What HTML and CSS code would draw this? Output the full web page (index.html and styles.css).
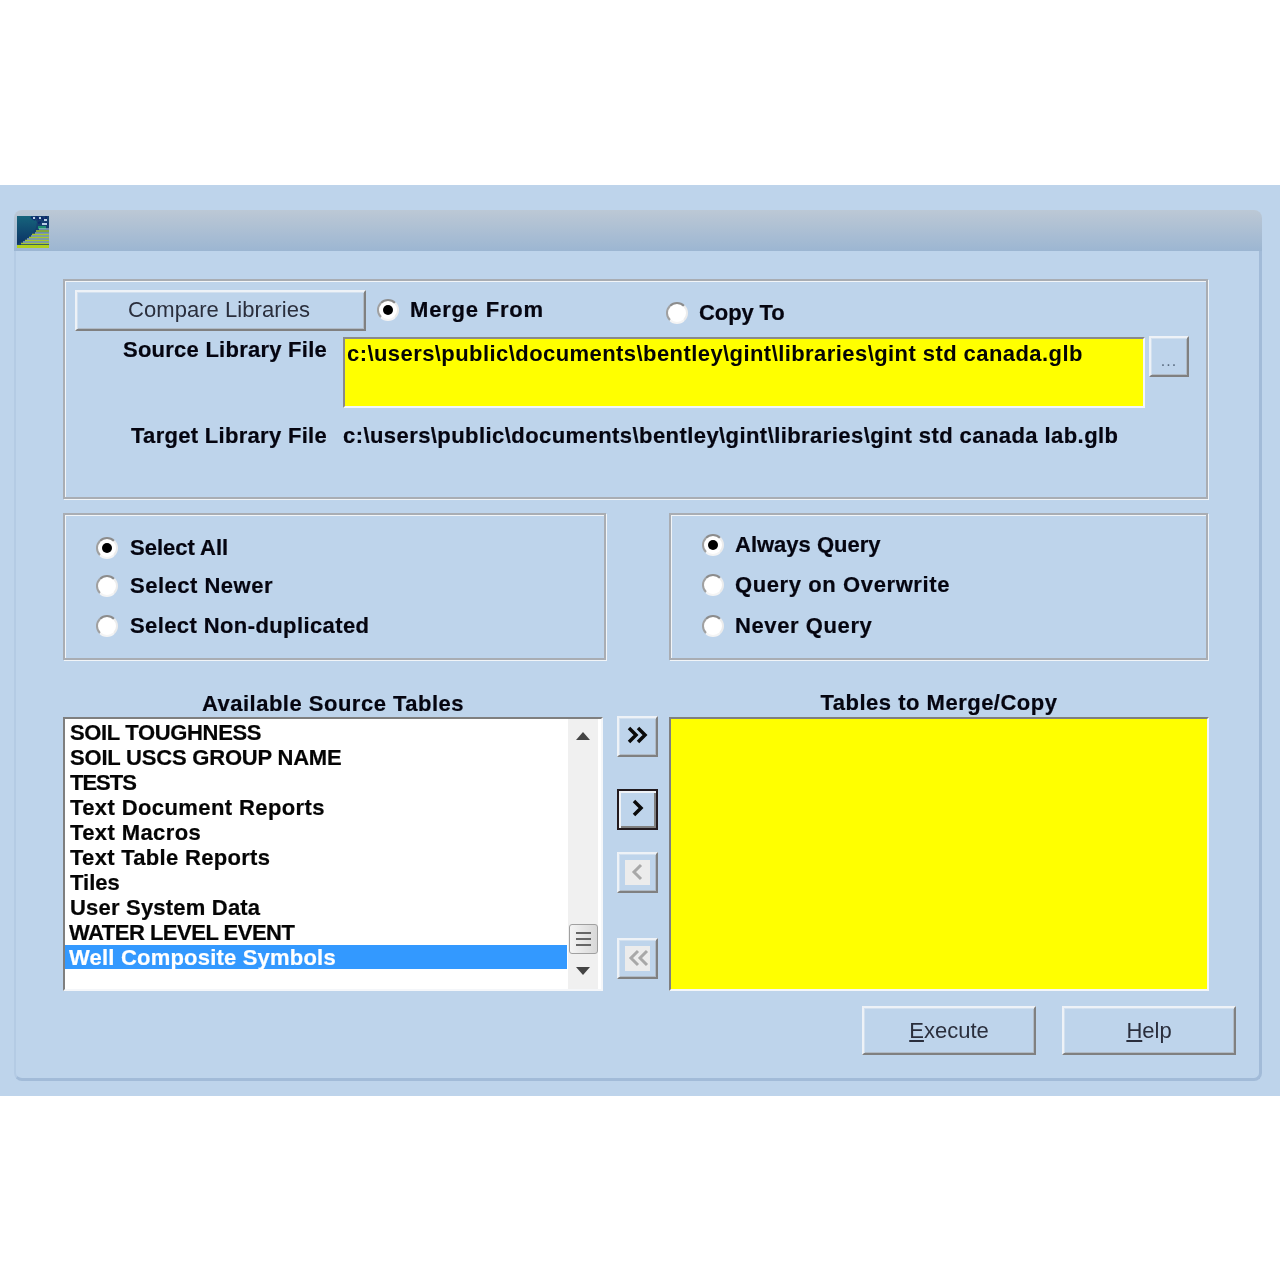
FILE: index.html
```html
<!DOCTYPE html>
<html lang="en">
<head>
<meta charset="utf-8">
<title>Merge Libraries</title>
<link rel="stylesheet" href="styles.css">
</head>
<body>
<main class="stage">
  <section class="window">
    <header class="titlebar">
      <svg class="app-icon" width="32" height="32" viewBox="0 0 32 32">
        <defs><linearGradient id="ig" x1="0" y1="0" x2="0" y2="1"><stop offset="0" stop-color="#16647c"/><stop offset="1" stop-color="#0a2c62"/></linearGradient></defs>
        <rect width="32" height="32" fill="url(#ig)"/>
        <path d="M32 0H15L20 6 19 12 15 18 9 23 0 28V32H32Z" fill="#16406f"/>
        <path d="M14 1l4 3M19 0l3 4M24 1l3 3M29 0v4M21 7l3-1M28 7l3 1" stroke="#0e2a6e" stroke-width="2" fill="none"/>
        <path d="M16 2h2M22 2h2M27 4h3M25 8h5" stroke="#b8cfe6" stroke-width="2" fill="none"/>
        <path d="M21 10h8v3h-8z" fill="#1f9070"/>
        <path d="M19 15h13M15 18.500h17M12 21.500h20M8 24.500h24M4 27.500h28" stroke="#a6c82c" stroke-width="1.500"/>
        <path d="M22 13h10M18 17h14M14 20h18M10 23h22M6 26h26" stroke="#c3d6e4" stroke-width="1"/>
        <path d="M0 30.500h32" stroke="#b2d01e" stroke-width="3"/>
      </svg>
    </header>
    <div class="content">
      <fieldset class="panel panel-files">
        <div class="mode-row">
          <button class="btn btn-compare" type="button">Compare Libraries</button>
          <label class="opt opt-merge ls-8"><span class="radio on"></span>Merge From</label>
          <label class="opt opt-copy"><span class="radio"></span>Copy To</label>
        </div>
        <div class="source-row">
          <span class="field-label ls-25">Source Library File</span>
          <div class="source-box">c:\users\public\documents\bentley\gint\libraries\gint std canada.glb</div>
          <button class="btn btn-browse" type="button">...</button>
        </div>
        <div class="target-row">
          <span class="field-label ls-3">Target Library File</span>
          <span class="target-path">c:\users\public\documents\bentley\gint\libraries\gint std canada lab.glb</span>
        </div>
      </fieldset>

      <div class="option-panels">
        <fieldset class="panel panel-select">
          <label class="opt"><span class="radio on"></span>Select All</label>
          <label class="opt ls-5"><span class="radio"></span>Select Newer</label>
          <label class="opt ls-4"><span class="radio"></span>Select Non-duplicated</label>
        </fieldset>
        <fieldset class="panel panel-query">
          <label class="opt"><span class="radio on"></span>Always Query</label>
          <label class="opt ls-6"><span class="radio"></span>Query on Overwrite</label>
          <label class="opt ls-6"><span class="radio"></span>Never Query</label>
        </fieldset>
      </div>

      <div class="tables">
        <div class="col-source">
          <h2 class="col-title ls-5">Available Source Tables</h2>
          <div class="listbox">
            <ul class="items">
              <li class="ls-n3">SOIL TOUGHNESS</li>
              <li class="ls-n2">SOIL USCS GROUP NAME</li>
              <li class="ls-n10">TESTS</li>
              <li class="ls-4">Text Document Reports</li>
              <li class="ls-4">Text Macros</li>
              <li class="ls-3">Text Table Reports</li>
              <li>Tiles</li>
              <li class="ls-2">User System Data</li>
              <li class="ls-n5 shift">WATER LEVEL EVENT</li>
              <li class="selected ls-2">Well Composite Symbols</li>
            </ul>
            <div class="scrollbar">
              <span class="arrow up"></span>
              <span class="thumb"><i></i><i></i><i></i></span>
              <span class="arrow down"></span>
            </div>
          </div>
        </div>
        <div class="transfer">
          <button class="btn btn-move b1" type="button"><svg class="glyph" width="24" height="20" viewBox="0 0 24 20"><path d="M3 3l7 7-7 7M12 3l7 7-7 7" fill="none" stroke="#0a0a0a" stroke-width="3.500"/></svg></button>
          <button class="btn btn-move b2 focused" type="button"><svg class="glyph" width="24" height="20" viewBox="0 0 24 20"><path d="M8 3l7 7-7 7" fill="none" stroke="#0a0a0a" stroke-width="3.500"/></svg></button>
          <button class="btn btn-move b3" type="button"><span class="disabled-face"><svg class="glyph" width="24" height="20" viewBox="0 0 24 20"><path d="M15 3L8 10l7 7" fill="none" stroke="#a8a8a8" stroke-width="3"/></svg></span></button>
          <button class="btn btn-move b4" type="button"><span class="disabled-face"><svg class="glyph" width="24" height="20" viewBox="0 0 24 20"><path d="M12 3L5 10l7 7M21 3l-7 7 7 7" fill="none" stroke="#a8a8a8" stroke-width="3"/></svg></span></button>
        </div>
        <div class="col-target">
          <h2 class="col-title title-target ls-5">Tables to Merge/Copy</h2>
          <div class="target-list"></div>
        </div>
      </div>

      <div class="actions">
        <button class="btn btn-action" type="button"><u>E</u>xecute</button>
        <button class="btn btn-action" type="button"><u>H</u>elp</button>
      </div>
    </div>
  </section>
</main>
</body>
</html>
```
FILE: styles.css
```css
* { box-sizing: border-box; }
html, body { margin: 0; background: #fff; }
body { height: 1280px; padding-top: 185px; font-family: "Liberation Sans", Arial, sans-serif; color: #050510; }
.stage { height: 911px; padding: 25px 18px 0 14px; background: #bed4eb; }
.window { height: 871px; display: flex; flex-direction: column; filter: blur(0.4px); }
.titlebar { height: 41px; padding: 6px 0 0 3px; border-radius: 8px 8px 0 0; background: linear-gradient(#bcc8d5, #9cb6d2); }
.app-icon { display: block; }
.content { flex: 1; padding: 28px 0 0 47px; border: solid #a2bbd8; border-width: 0 3px 3px 2px; border-left-color: #b4cbe4; border-radius: 0 0 8px 8px; }
.panel { margin: 0; padding: 0; min-width: 0; border: 2px solid #a9adb3; box-shadow: inset 1px 1px 0 #f2f5f8, 1px 1px 0 #f2f5f8; }
.btn { display: block; margin: 0; padding: 0; font: 22px "Liberation Sans", Arial, sans-serif; color: #2a2e3c; background: #bed4eb; border: 2px solid; border-color: #eef2f7 #808080 #808080 #eef2f7; box-shadow: inset 1px 1px 0 #d2e0ef, inset -1px -1px 0 #b0bac5; }
.opt { display: flex; align-items: center; font-size: 22px; font-weight: 700; line-height: 26px; -webkit-text-stroke: 0.2px #050510; }
.radio { position: relative; flex: none; width: 22px; height: 22px; margin-right: 12px; border-radius: 50%; background: #fff; border: 2px solid; border-color: #8c8c8c #ececec #f4f4f4 #a0a0a0; }
.radio.on::after { content: ""; position: absolute; left: 4px; top: 4px; width: 10px; height: 10px; border-radius: 50%; background: #000; }

.ls-2 { letter-spacing: 0.2px; }
.ls-25 { letter-spacing: 0.25px; }
.ls-3 { letter-spacing: 0.3px; }
.ls-4 { letter-spacing: 0.4px; }
.ls-5 { letter-spacing: 0.5px; }
.ls-6 { letter-spacing: 0.6px; }
.ls-8 { letter-spacing: 0.8px; }
.ls-n2 { letter-spacing: -0.2px; }
.ls-n3 { letter-spacing: -0.35px; }
.ls-n5 { letter-spacing: -0.5px; }
.ls-n10 { letter-spacing: -1px; }

.panel-files { width: 1145px; height: 220px; padding: 9px 0 0 10px; }
.mode-row { display: flex; height: 41px; align-items: center; }
.btn-compare { width: 291px; height: 41px; padding: 0 3px 1px 0; letter-spacing: 0.06px; }
.opt-merge { width: 289px; margin-left: 11px; padding-bottom: 2px; }
.opt-merge .radio, .opt-copy .radio, .panel-query .radio { margin-right: 11px; }
.opt-copy { position: relative; top: 2px; letter-spacing: -0.1px; }
.source-row { display: flex; align-items: flex-start; margin-top: 6px; }
.field-label { flex: none; width: 252px; font-size: 22px; font-weight: 700; line-height: 26px; text-align: right; -webkit-text-stroke: 0.2px #050510; }
.source-box { width: 802px; height: 71px; margin-left: 16px; padding: 2px 0 0 2px; font-size: 22px; font-weight: 700; line-height: 26px; letter-spacing: 0.43px; color: #050505; background: #ff0; border: 2px solid; border-color: #8a8a8a #f4f6f9 #f4f6f9 #8a8a8a; white-space: nowrap; }
.btn-browse { width: 40px; height: 41px; margin: -1px 0 0 4px; padding-top: 8px; font-size: 16px; letter-spacing: 1px; color: #5a6c80; }
.target-row { display: flex; margin-top: 15px; }
.target-path { margin-left: 16px; font-size: 22px; font-weight: 700; line-height: 26px; letter-spacing: 0.43px; white-space: nowrap; -webkit-text-stroke: 0.2px #050510; }

.option-panels { display: flex; gap: 63px; margin-top: 14px; }
.panel-select, .panel-query { height: 147px; display: flex; flex-direction: column; }
.panel-select { width: 543px; padding: 20px 0 0 31px; gap: 13px; }
.panel-select .opt:nth-child(2) { margin-top: -1px; }
.panel-select .opt:nth-child(3) { margin-top: 1px; }
.panel-query { width: 539px; padding: 17px 0 0 31px; gap: 14px; }
.panel-query .opt:nth-child(3) { margin-top: 1px; }

.tables { display: flex; margin-top: 30px; }
.col-source { width: 540px; }
.col-title { margin: 0; height: 27px; font-size: 22px; font-weight: 700; line-height: 26px; text-align: center; -webkit-text-stroke: 0.2px #050510; }
.col-source .col-title { transform: translateY(1px); }
.listbox { display: flex; height: 274px; background: #fff; border: 2px solid; border-color: #7f7f7f #f4f6f9 #f4f6f9 #7f7f7f; }
.items { flex: 1; min-width: 0; margin: 0; padding: 1px 0 0 0; list-style: none; }
.items li { height: 25px; padding-left: 5px; font-size: 22px; font-weight: 700; line-height: 25px; color: #050505; white-space: nowrap; -webkit-text-stroke: 0.2px #050505; }
.items li.shift { padding-left: 4px; }
.items li.selected { margin-right: 1px; height: 24px; line-height: 25px; padding-left: 4px; color: #fff; background: #3399ff; -webkit-text-stroke: 0.2px #fff; }
.scrollbar { flex: none; width: 30px; margin-right: 3px; display: flex; flex-direction: column; align-items: center; background: #f0f0f0; }
.arrow { display: block; width: 0; height: 0; border: 7px solid transparent; }
.arrow.up { margin-top: 13px; border-top: 0; border-bottom: 8px solid #444; }
.arrow.down { margin-top: 13px; border-bottom: 0; border-top: 8px solid #444; }
.thumb { display: flex; flex-direction: column; justify-content: center; gap: 4px; margin-top: 184px; width: 29px; height: 30px; padding: 0 6px; background: linear-gradient(90deg, #f4f4f4, #d8d8d8); border: 1px solid #a0a0a0; border-radius: 3px; }
.thumb i { display: block; height: 2px; background: #666; }

.transfer { flex: none; width: 41px; margin-left: 14px; padding-top: 26px; display: flex; flex-direction: column; }
.btn-move { width: 41px; height: 41px; display: flex; align-items: center; justify-content: center; }
.glyph { margin-top: -3px; }
.disabled-face .glyph { margin-top: -2px; }
.b3 { margin-top: 22px; }
.b4 { margin-top: 45px; }
.focused { margin-top: 32px; border-color: #221a1e; box-shadow: inset 2px 2px 0 #eef2f7, inset -2px -2px 0 #808080; }
.disabled-face { display: flex; width: 25px; height: 25px; align-items: center; justify-content: center; background: #ececec; }
.col-target { width: 540px; margin-left: 11px; }
.title-target { height: 27px; }
.target-list { height: 274px; background: #ff0; border: 2px solid; border-color: #7f7f7f #f4f6f9 #f4f6f9 #7f7f7f; }

.actions { display: flex; justify-content: flex-end; gap: 26px; margin-top: 15px; padding-right: 23px; }
.btn-action { width: 174px; height: 49px; }
```
